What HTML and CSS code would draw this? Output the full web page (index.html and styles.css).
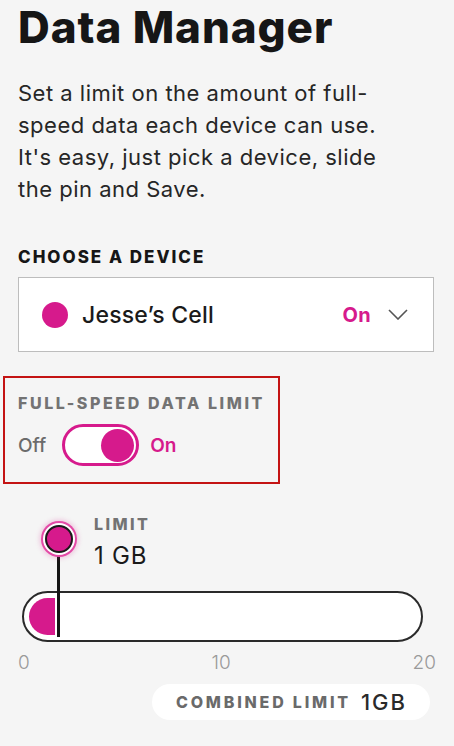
FILE: index.html
```html
<!DOCTYPE html>
<html lang="en">
<head>
<meta charset="utf-8">
<title>Data Manager</title>
<link rel="stylesheet" href="styles.css">
</head>
<body>
<main class="page">
  <h1 class="title">Data Manager</h1>
  <p class="intro">Set a limit on the amount of full-<br>speed data each device can use.<br>It's easy, just pick a device, slide<br>the pin and Save.</p>

  <h2 class="label">CHOOSE A DEVICE</h2>
  <div class="device-select">
    <span class="device-dot"></span>
    <span class="device-name">Jesse’s Cell</span>
    <span class="device-status">On</span>
    <svg class="chevron" width="20" height="11" viewBox="0 0 20 11" aria-hidden="true">
      <path d="M1 1 L10 10 L19 1" fill="none" stroke="#555" stroke-width="1.6" stroke-linejoin="miter"/>
    </svg>
  </div>

  <section class="limit-toggle">
    <h2 class="label-muted">FULL-SPEED DATA LIMIT</h2>
    <div class="toggle-row">
      <span class="toggle-off">Off</span>
      <span class="switch"><span class="switch-knob"></span></span>
      <span class="toggle-on">On</span>
    </div>
  </section>

  <section class="slider">
    <div class="readout">
      <div class="readout-label">LIMIT</div>
      <div class="readout-value">1 GB</div>
    </div>
    <div class="track"><span class="track-fill"></span></div>
    <span class="pin-line"></span>
    <span class="pin"></span>
    <div class="ticks"><span>0</span><span>10</span><span>20</span></div>
    <div class="combined">
      <span class="combined-label">COMBINED LIMIT</span>
      <span class="combined-value">1GB</span>
    </div>
  </section>
</main>
</body>
</html>
```

FILE: styles.css
```css
* { box-sizing: border-box; }

html, body {
  margin: 0;
  padding: 0;
  background: #f5f5f5;
}

body {
  font-family: Inter, "Noto Sans", "DejaVu Sans", sans-serif;
  color: #1c1c1c;
}

.page {
  padding: 0 18px;
}

.title {
  margin: 0;
  padding-top: 2px;
  font-size: 44px;
  line-height: 50px;
  font-weight: 800;
  letter-spacing: 0.9px;
  color: #161616;
}

.intro {
  margin: 25px 0 0;
  font-size: 22px;
  line-height: 32px;
  font-weight: 400;
  letter-spacing: 0.5px;
  color: #262626;
  white-space: nowrap;
}

.label {
  margin: 42px 0 0;
  font-size: 17px;
  line-height: 20px;
  font-weight: 800;
  letter-spacing: 2px;
  color: #161616;
}

.label-muted {
  margin: 0;
  font-size: 16px;
  line-height: 18px;
  font-weight: 800;
  letter-spacing: 2.6px;
  color: #737373;
}

.device-select {
  margin-top: 10px;
  height: 75px;
  width: 416px;
  background: #fff;
  border: 1.5px solid #bdbdbd;
  display: flex;
  align-items: center;
  padding: 0 25px 0 23px;
}

.device-dot {
  width: 26px;
  height: 26px;
  border-radius: 50%;
  background: #d61a8c;
  flex: none;
}

.device-name {
  margin-left: 14px;
  font-size: 23px;
  font-weight: 500;
  letter-spacing: 0.2px;
  color: #1a1a1a;
}

.device-status {
  margin-left: auto;
  font-size: 20px;
  font-weight: 700;
  letter-spacing: 0.3px;
  color: #d61a8c;
}

.chevron {
  margin-left: 17px;
  flex: none;
}

.limit-toggle {
  margin: 24px 0 0 -15px;
  width: 277px;
  height: 108px;
  border: 2px solid #c41414;
  padding: 16px 0 0 13px;
}

.toggle-row {
  margin-top: 12px;
  display: flex;
  align-items: center;
}

.toggle-off {
  font-size: 19px;
  font-weight: 500;
  color: #6b6b6b;
}

.switch {
  margin-left: 16px;
  width: 77px;
  height: 42px;
  border: 3px solid #d61a8c;
  border-radius: 21px;
  background: #fff;
  display: flex;
  align-items: center;
  justify-content: flex-end;
  padding-right: 2px;
}

.switch-knob {
  width: 33px;
  height: 33px;
  border-radius: 50%;
  background: #d61a8c;
}

.toggle-on {
  margin-left: 11px;
  font-size: 19px;
  font-weight: 600;
  color: #d61a8c;
}

.slider {
  position: relative;
  margin-top: 31px;
}

.readout {
  padding-left: 76px;
}

.readout-label {
  font-size: 16px;
  line-height: 18px;
  font-weight: 800;
  letter-spacing: 2.4px;
  color: #737373;
}

.readout-value {
  margin-top: 9px;
  font-size: 24px;
  line-height: 28px;
  font-weight: 400;
  letter-spacing: 0.8px;
  color: #1a1a1a;
}

.track {
  margin: 21px 0 0 4px;
  width: 401px;
  height: 51px;
  border: 2px solid #2a2a2a;
  border-radius: 26px;
  background: #fff;
  padding: 5px;
  display: flex;
}

.track-fill {
  width: 26px;
  height: 37px;
  background: #d61a8c;
  border-radius: 19px 0 0 19px;
}

.pin-line {
  position: absolute;
  left: 39px;
  top: 26px;
  width: 3px;
  height: 96px;
  background: #151515;
}

.pin {
  position: absolute;
  left: 27px;
  top: 10px;
  width: 28px;
  height: 28px;
  border-radius: 50%;
  background: #d61a8c;
  border: 2px solid #1a1a1a;
  box-shadow: 0 0 0 2px #fff, 0 0 0 4px #e34aa6, 0 0 5px 5px rgba(214, 26, 140, 0.25);
}

.ticks {
  margin-top: 9px;
  width: 418px;
  display: flex;
  justify-content: space-between;
  font-size: 19px;
  line-height: 24px;
  font-weight: 300;
  color: #9a9a9a;
}

.combined {
  margin: 9px 6px 0 auto;
  width: 278px;
  height: 36px;
  border-radius: 18px;
  background: #fff;
  display: flex;
  align-items: center;
  padding-left: 24px;
}

.combined-label {
  font-size: 16px;
  font-weight: 800;
  letter-spacing: 2.8px;
  color: #6a6a6a;
}

.combined-value {
  margin-left: 10px;
  font-size: 22px;
  font-weight: 500;
  letter-spacing: 2px;
  color: #2a2a2a;
}
```
